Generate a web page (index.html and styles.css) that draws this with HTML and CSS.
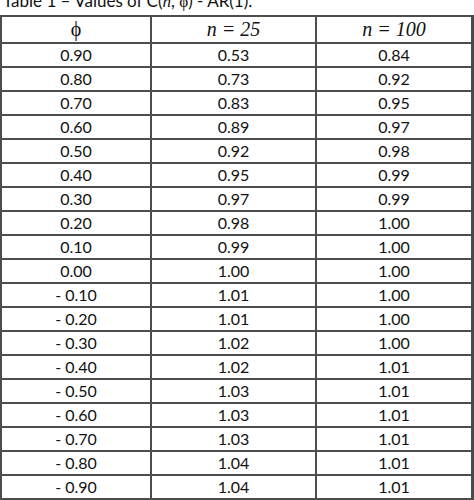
FILE: index.html
```html
<!DOCTYPE html>
<html>
<head>
<meta charset="utf-8">
<link rel="stylesheet" href="styles.css">
</head>
<body>
<div class="page">
  <p class="caption">Table 1 – Values of C(<i>n</i>, <span class="sym">ϕ</span>) - AR(1).</p>
  <table class="values">
    <thead>
      <tr><th class="phi">ϕ</th><th><i>n</i> = 25</th><th><i>n</i> = <i>100</i></th></tr>
    </thead>
    <tbody>
      <tr><td>0.90</td><td>0.53</td><td>0.84</td></tr>
      <tr><td>0.80</td><td>0.73</td><td>0.92</td></tr>
      <tr><td>0.70</td><td>0.83</td><td>0.95</td></tr>
      <tr><td>0.60</td><td>0.89</td><td>0.97</td></tr>
      <tr><td>0.50</td><td>0.92</td><td>0.98</td></tr>
      <tr><td>0.40</td><td>0.95</td><td>0.99</td></tr>
      <tr><td>0.30</td><td>0.97</td><td>0.99</td></tr>
      <tr><td>0.20</td><td>0.98</td><td>1.00</td></tr>
      <tr><td>0.10</td><td>0.99</td><td>1.00</td></tr>
      <tr><td>0.00</td><td>1.00</td><td>1.00</td></tr>
      <tr><td>- 0.10</td><td>1.01</td><td>1.00</td></tr>
      <tr><td>- 0.20</td><td>1.01</td><td>1.00</td></tr>
      <tr><td>- 0.30</td><td>1.02</td><td>1.00</td></tr>
      <tr><td>- 0.40</td><td>1.02</td><td>1.01</td></tr>
      <tr><td>- 0.50</td><td>1.03</td><td>1.01</td></tr>
      <tr><td>- 0.60</td><td>1.03</td><td>1.01</td></tr>
      <tr><td>- 0.70</td><td>1.03</td><td>1.01</td></tr>
      <tr><td>- 0.80</td><td>1.04</td><td>1.01</td></tr>
      <tr><td>- 0.90</td><td>1.04</td><td>1.01</td></tr>
    </tbody>
  </table>
</div>
</body>
</html>
```
FILE: styles.css
```css
html, body {
  margin: 0;
  padding: 0;
  background: #ffffff;
}
.page {
  width: 474px;
  overflow: hidden;
  height: 500px;
}
.caption {
  margin: -14px 0 0 3px;
  height: 29px;
  font-family: Lato, "Liberation Sans", sans-serif;
  font-size: 17px;
  line-height: 29px;
  color: #111;
  white-space: nowrap;
}
.caption i,
.caption .sym {
  font-family: "Liberation Serif", serif;
}
.values {
  border-collapse: collapse;
  width: 474px;
  table-layout: fixed;
  border-top: 2px solid #3a3a3a;
  border-left: 2px solid #3a3a3a;
  border-right: 3px solid #4a4a4a;
  border-bottom: 2px solid #999;
  color: #111;
}
.values th, .values td {
  border: 2px solid #4d4d4d;
  text-align: center;
  padding: 0;
}
.values th:nth-child(1) { width: 148px; }
.values th:nth-child(2) { width: 163px; }
.values th {
  height: 25px;
  font-family: "Liberation Serif", serif;
  font-weight: normal;
  font-style: italic;
  font-size: 20px;
  line-height: 25px;
}
.values th.phi {
  font-style: normal;
}
.values td {
  height: 22px;
  font-family: Lato, "Liberation Sans", sans-serif;
  font-size: 16px;
  line-height: 22px;
}
```
